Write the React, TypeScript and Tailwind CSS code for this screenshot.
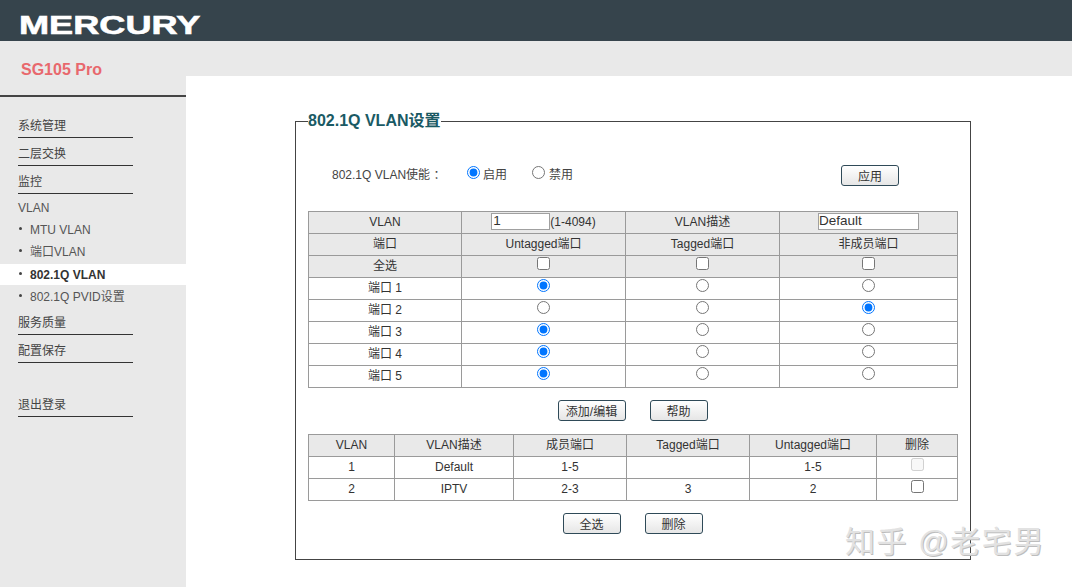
import React from "react";

const font = { fontFamily: '"Liberation Sans", "Noto Sans CJK SC", sans-serif' };

function NavLine({ children }: { children: React.ReactNode }) {
  return (
    <div className="ml-[18px] w-[115px] h-[28px] border-b border-[#333] flex items-center text-[12px] text-[#444] pt-[5px]">
      {children}
    </div>
  );
}

function SubItem({ children, active, h = "h-[22px]" }: { children: React.ReactNode; active?: boolean; h?: string }) {
  return (
    <div className={`${h} flex items-center text-[12px] pl-[19px] ${active ? "bg-white font-bold text-[#333]" : "text-[#555]"}`}>
      <span className="w-[3px] h-[3px] rounded-full bg-[#444] mr-[8px] mb-[3px]" />
      {children}
    </div>
  );
}

function Btn({ children }: { children: React.ReactNode }) {
  return (
    <button className="w-[58px] h-[21px] rounded-[3px] border border-[#2f4a58] bg-gradient-to-b from-white to-[#e6e6e6] text-[12px] text-[#333] pt-[2px] leading-none">
      {children}
    </button>
  );
}

const cell = "border border-[#9a9a9a] p-0 pb-[2px] text-center text-[12px] text-[#333] font-normal";

function Radio({ name, checked }: { name: string; checked?: boolean }) {
  return <input type="radio" name={name} defaultChecked={checked} className="block mx-auto mb-[4px] w-[13px] h-[13px]" />;
}

function Check({ disabled }: { disabled?: boolean }) {
  return <input type="checkbox" disabled={disabled} className="block mx-auto mb-[4px] w-[13px] h-[13px]" />;
}

const ports = [
  { label: "端口 1", on: 0 },
  { label: "端口 2", on: 2 },
  { label: "端口 3", on: 0 },
  { label: "端口 4", on: 0 },
  { label: "端口 5", on: 0 },
];

export default function App() {
  return (
    <div style={font} className="relative w-[1072px] h-[587px] overflow-hidden bg-white flex flex-col">
      <header className="h-[41px] bg-[#36444c] flex items-center pl-[19px] shrink-0">
        <span className="inline-block origin-left scale-x-[1.39] text-white font-bold text-[26px] leading-none [-webkit-text-stroke:0.6px_white] mt-[8px]">
          MERCURY
        </span>
      </header>
      <div className="flex flex-1 min-h-0">
        <aside className="w-[186px] shrink-0 bg-[#e9e9e9]">
          <div className="h-[56px] border-b-2 border-[#444] pl-[21px] pt-[20px] text-[16px] leading-[18px] font-bold text-[#e8686d]">
            SG105 Pro
          </div>
          <nav className="pt-[13px]">
            <NavLine>系统管理</NavLine>
            <NavLine>二层交换</NavLine>
            <NavLine>监控</NavLine>
            <div className="h-[26px] pl-[18px] pt-[2px] flex items-center text-[12px] text-[#555]">VLAN</div>
            <SubItem h="h-[20px]">MTU VLAN</SubItem>
            <SubItem h="h-[24px]">端口VLAN</SubItem>
            <SubItem active h="h-[21px]">802.1Q VLAN</SubItem>
            <SubItem h="h-[22px] pt-[1px]">802.1Q PVID设置</SubItem>
            <NavLine>服务质量</NavLine>
            <NavLine>配置保存</NavLine>
            <div className="h-[26px]" />
            <NavLine>退出登录</NavLine>
          </nav>
        </aside>
        <div className="flex-1 flex flex-col min-w-0">
          <div className="h-[35px] bg-[#e9e9e9] shrink-0" />
          <main className="flex-1 pl-[109px] pt-[35px]">
            <fieldset className="w-[676px] h-[449px] border border-[#444] pl-[12px]">
              <legend className="text-[16px] leading-[20px] font-bold text-[#1a5a64]">802.1Q VLAN设置</legend>
              <div className="flex items-center h-[24px] mt-[32px] text-[12px] text-[#444]">
                <span className="ml-[24px] w-[135px]">802.1Q VLAN使能 ：</span>
                <input type="radio" name="en" defaultChecked className="w-[13px] h-[13px] mb-[5px]" />
                <span className="ml-[3px] w-[49px]">启用</span>
                <input type="radio" name="en" className="w-[13px] h-[13px] mb-[5px]" />
                <span className="ml-[4px]">禁用</span>
                <span className="ml-[268px] mt-[1px] flex">
                  <Btn>应用</Btn>
                </span>
              </div>
              <table className="w-[649px] mt-[24px] table-fixed border-collapse">
                <colgroup>
                  <col className="w-[153px]" />
                  <col className="w-[164px]" />
                  <col className="w-[154px]" />
                  <col className="w-[178px]" />
                </colgroup>
                <tbody>
                  <tr className="h-[22px] bg-[#e9e9e9]">
                    <td className={cell}>VLAN</td>
                    <td className={cell}>
                      <div className="flex justify-center items-center">
                        <input defaultValue="1" className="w-[59px] h-[17px] border border-[#a0a0a0] bg-white text-[13.5px] text-[#333] pl-[1px] outline-none" />
                        <span>(1-4094)</span>
                      </div>
                    </td>
                    <td className={cell}>VLAN描述</td>
                    <td className={cell}>
                      <input defaultValue="Default" className="block mx-auto w-[101px] h-[17px] border border-[#a0a0a0] bg-white text-[13.5px] text-[#333] outline-none" />
                    </td>
                  </tr>
                  <tr className="h-[22px] bg-[#e9e9e9]">
                    <td className={cell}>端口</td>
                    <td className={cell}>Untagged端口</td>
                    <td className={cell}>Tagged端口</td>
                    <td className={cell}>非成员端口</td>
                  </tr>
                  <tr className="h-[22px] bg-[#e9e9e9]">
                    <td className={cell}>全选</td>
                    <td className={cell}><Check /></td>
                    <td className={cell}><Check /></td>
                    <td className={cell}><Check /></td>
                  </tr>
                  {ports.map((p, i) => (
                    <tr key={p.label} className="h-[22px]">
                      <td className={cell}>{p.label}</td>
                      {[0, 1, 2].map((c) => (
                        <td key={c} className={cell}>
                          <Radio name={`port${i}`} checked={p.on === c} />
                        </td>
                      ))}
                    </tr>
                  ))}
                </tbody>
              </table>
              <div className="w-[649px] flex justify-center gap-6 mt-[12px]">
                <button className="w-[68px] h-[21px] rounded-[3px] border border-[#2f4a58] bg-gradient-to-b from-white to-[#e6e6e6] text-[12px] text-[#333] pt-[2px] leading-none">
                  添加/编辑
                </button>
                <Btn>帮助</Btn>
              </div>
              <table className="w-[649px] mt-[13px] table-fixed border-collapse">
                <colgroup>
                  <col className="w-[86px]" />
                  <col className="w-[119px]" />
                  <col className="w-[113px]" />
                  <col className="w-[123px]" />
                  <col className="w-[127px]" />
                  <col className="w-[81px]" />
                </colgroup>
                <tbody>
                  <tr className="h-[22px] bg-[#e9e9e9]">
                    <td className={cell}>VLAN</td>
                    <td className={cell}>VLAN描述</td>
                    <td className={cell}>成员端口</td>
                    <td className={cell}>Tagged端口</td>
                    <td className={cell}>Untagged端口</td>
                    <td className={cell}>删除</td>
                  </tr>
                  <tr className="h-[22px]">
                    <td className={cell}>1</td>
                    <td className={cell}>Default</td>
                    <td className={cell}>1-5</td>
                    <td className={cell}></td>
                    <td className={cell}>1-5</td>
                    <td className={cell}><Check disabled /></td>
                  </tr>
                  <tr className="h-[22px]">
                    <td className={cell}>2</td>
                    <td className={cell}>IPTV</td>
                    <td className={cell}>2-3</td>
                    <td className={cell}>3</td>
                    <td className={cell}>2</td>
                    <td className={cell}><Check /></td>
                  </tr>
                </tbody>
              </table>
              <div className="w-[649px] flex justify-center gap-6 mt-[12px]">
                <Btn>全选</Btn>
                <Btn>删除</Btn>
              </div>
            </fieldset>
          </main>
        </div>
      </div>
      <div className="absolute left-[845px] top-[522px] text-[30px] leading-[40px] tracking-[1.6px] text-[#e2e2e2] [text-shadow:1px_1px_0_#bdbdbd] whitespace-nowrap">
        知乎 @老宅男
      </div>
    </div>
  );
}
